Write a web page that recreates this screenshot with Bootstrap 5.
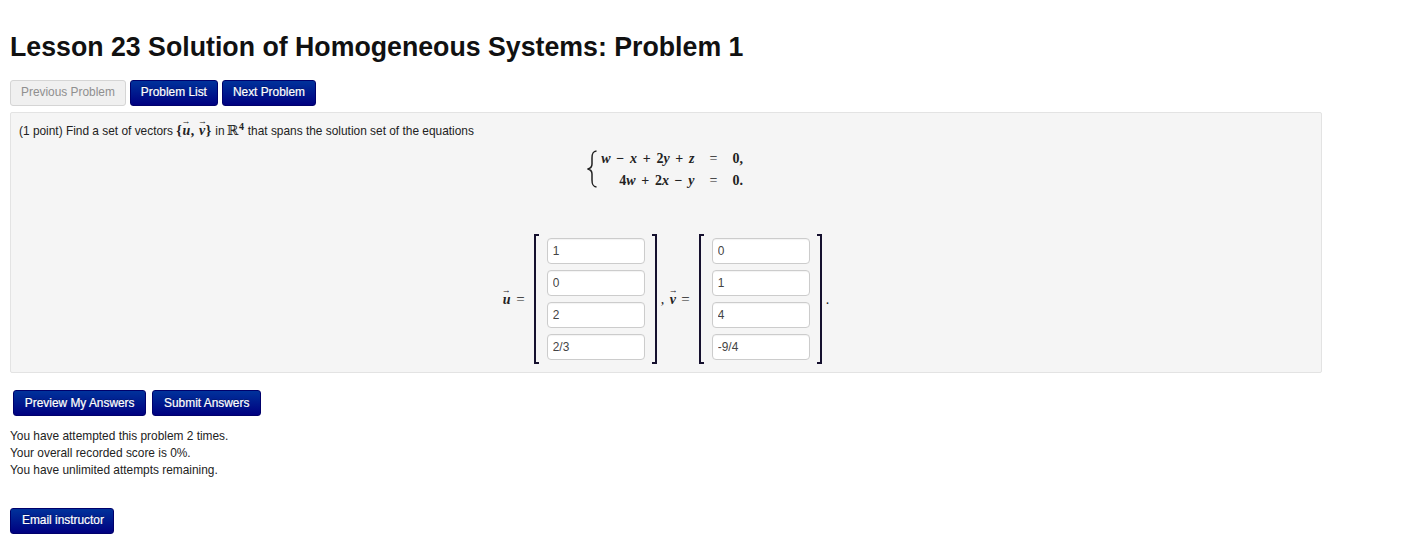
<!DOCTYPE html>
<html lang="en"><head><meta charset="utf-8"><title>Problem 1</title>
<link rel="stylesheet" href="https://cdn.jsdelivr.net/npm/bootstrap@5.3.0/dist/css/bootstrap.min.css">
<style>
body{font-family:"Liberation Sans",Arial,sans-serif;font-size:11.9px;line-height:17px;color:#222;background:#fff;padding:0 10px;}
.ptitle{font-family:"Liberation Sans",Arial,sans-serif;font-weight:700;font-size:26.72px;line-height:32px;color:#111;margin:0;padding-top:31px;padding-bottom:17px;}
.wbtn{font-size:11.9px;line-height:18px;padding:2px 10px 4px;border-radius:3px;color:#fff;border:1px solid #00006b;background:linear-gradient(#00329b,#000080);text-shadow:0 -1px 0 rgba(0,0,0,.25);-webkit-text-stroke:.2px #fff;}
.wbtn:hover{color:#fff;background:#000080;}
.wbtn.off{background:#f0f0f0;border-color:#d5d5d5;color:#8f8f8f;text-shadow:none;opacity:1;-webkit-text-stroke:0;}
.navgap{gap:4px;}
.pbox{width:1312px;height:261px;background:#f5f5f5;border:1px solid #e3e3e3;border-radius:2px;margin-top:6px;padding:9px 8px;}
.mth{font-family:"Liberation Serif","DejaVu Serif",serif;font-weight:700;font-size:14px;color:#222;}
.mi{font-style:italic;}
.vecv{position:relative;display:inline-block;font-style:italic;}
.vecv::after{content:"→";position:absolute;left:-1px;top:-6px;font-size:9px;font-style:normal;line-height:10px;}
.setm{font-size:14px;letter-spacing:.6px;}
.dbl{font-weight:400;font-size:14px;margin-left:-1px;letter-spacing:.5px;}
.dbl sup{font-weight:700;font-size:10px;top:-.5em;}
.eqwrap{height:48px;margin-top:5px;}
.bracesvg{width:12px;height:38px;margin-right:1px;}
.eqgrid{display:grid;grid-template-columns:96px 38px 14px;row-gap:5px;line-height:17px;}
.eqr{text-align:right;word-spacing:2.2px;white-space:nowrap;}
.eqc{text-align:center;font-weight:400;}
.mrow{margin-top:41px;height:130px;}
.brk{width:5px;height:130px;border:2px solid #15102e;flex:none;}
.brk-l{border-right:0;margin-left:9px;margin-right:8px;}
.brk-r{border-left:0;margin-left:7px;margin-right:4px;}
.cells{display:flex;flex-direction:column;gap:6px;padding-top:4px;}
.cell{width:98px;height:26px;font-family:"Liberation Sans",Arial,sans-serif;font-size:11.9px;color:#444;background:#fff;border:1px solid #ccc;border-radius:4px;padding:0 5px;box-shadow:inset 0 1px 1px rgba(0,0,0,.05);outline:0;}
.lhs{white-space:nowrap;display:flex;justify-content:space-between;}
.lhs-u{width:22px;}
.lhs-v{width:29px;}
.eqs{font-weight:400;font-size:15px;}
.thin{font-weight:400;}
.actions{padding:17px 3px 0;gap:6px;}
.actions .wbtn{padding:3px 10.8px;}
.info{margin:12px 0 0;color:#222;}
.mailw{margin-top:29px;}
.mailw .wbtn{padding-left:11px;padding-right:9px;}
</style></head>
<body>
<h1 class="ptitle">Lesson 23 Solution of Homogeneous Systems: Problem 1</h1>
<div class="d-flex navgap">
<button class="btn wbtn off" disabled>Previous Problem</button>
<a class="btn wbtn" href="#">Problem List</a>
<a class="btn wbtn" href="#">Next Problem</a>
</div>
<div class="pbox">
<div>(1 point) Find a set of vectors <span class="mth setm">{<span class="vecv">u</span>, <span class="vecv">v</span>}</span> in <span class="mth dbl">ℝ<sup>4</sup></span> that spans the solution set of the equations</div>
<div class="eqwrap d-flex justify-content-center align-items-center mth">
<svg class="bracesvg" viewBox="0 0 12 38" aria-hidden="true"><path d="M10.5 1C6.5 1.5 6 4 6 8V14C6 17 4.5 18.5 1.5 19C4.5 19.5 6 21 6 24V30C6 34 6.5 36.5 10.5 37" fill="none" stroke="#222" stroke-width="1.5"/></svg>
<div class="eqgrid">
<span class="eqr"><span class="mi">w</span> − <span class="mi">x</span> + 2<span class="mi">y</span> + <span class="mi">z</span></span><span class="eqc">=</span><span>0,</span>
<span class="eqr">4<span class="mi">w</span> + 2<span class="mi">x</span> − <span class="mi">y</span></span><span class="eqc">=</span><span>0.</span>
</div>
</div>
<div class="mrow d-flex justify-content-center align-items-center mth">
<span class="lhs lhs-u"><span class="vecv">u</span><span class="eqs">=</span></span>
<span class="brk brk-l"></span>
<div class="cells align-self-start"><input class="cell" value="1"><input class="cell" value="0"><input class="cell" value="2"><input class="cell" value="2/3"></div>
<span class="brk brk-r"></span>
<span class="lhs lhs-v"><span class="thin">,</span><span class="vecv">v</span><span class="eqs">=</span></span>
<span class="brk brk-l"></span>
<div class="cells align-self-start"><input class="cell" value="0"><input class="cell" value="1"><input class="cell" value="4"><input class="cell" value="-9/4"></div>
<span class="brk brk-r"></span>
<span class="thin">.</span>
</div>
</div>
<div class="d-flex actions">
<button class="btn wbtn">Preview My Answers</button>
<button class="btn wbtn">Submit Answers</button>
</div>
<p class="info">You have attempted this problem 2 times.<br>Your overall recorded score is 0%.<br>You have unlimited attempts remaining.</p>
<div class="mailw"><button class="btn wbtn">Email instructor</button></div>
<script src="https://cdn.jsdelivr.net/npm/bootstrap@5.3.0/dist/js/bootstrap.bundle.min.js"></script>
</body></html>
